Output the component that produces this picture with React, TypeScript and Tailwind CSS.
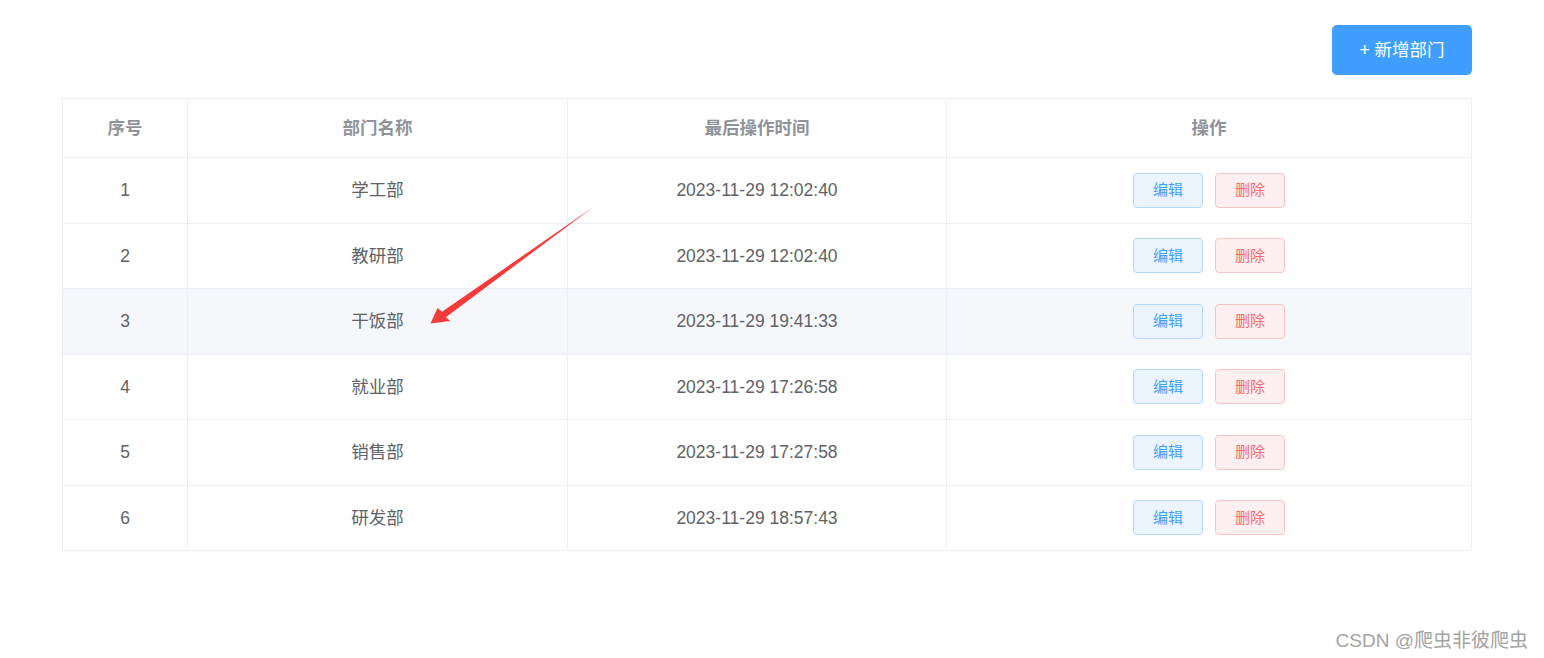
import React from "react";

const rows = [
  { id: 1, name: "学工部", time: "2023-11-29 12:02:40" },
  { id: 2, name: "教研部", time: "2023-11-29 12:02:40" },
  { id: 3, name: "干饭部", time: "2023-11-29 19:41:33", hover: true },
  { id: 4, name: "就业部", time: "2023-11-29 17:26:58" },
  { id: 5, name: "销售部", time: "2023-11-29 17:27:58" },
  { id: 6, name: "研发部", time: "2023-11-29 18:57:43" },
];

const font = { fontFamily: '"Liberation Sans", "Noto Sans CJK SC", sans-serif' };

export default function App() {
  return (
    <div className="relative w-[1544px] h-[658px] bg-white overflow-hidden" style={font}>
      <div className="pl-[62px] pt-[25px] w-[1472px]">
        <div className="flex justify-end">
          <button className="w-[140px] h-[50px] rounded-[5px] bg-[#409eff] text-white text-[17.5px] flex items-center justify-center">
            + 新增部门
          </button>
        </div>
        <div className="mt-[23px] w-[1410px] border-t border-l border-[#ebeef5]">
          <div className="grid grid-cols-[125px_380px_379px_525px] h-[59px] text-[17.5px] font-bold text-[#909399]">
            {["序号", "部门名称", "最后操作时间", "操作"].map((h) => (
              <div key={h} className="border-r border-b border-[#ebeef5] flex items-center justify-center">
                {h}
              </div>
            ))}
          </div>
          {rows.map((r) => (
            <div
              key={r.id}
              className={`grid grid-cols-[125px_380px_379px_525px] h-[65.5px] text-[17.5px] text-[#606266] ${r.hover ? "bg-[#f5f7fa]" : "bg-white"}`}
            >
              <div className="border-r border-b border-[#ebeef5] flex items-center justify-center">{r.id}</div>
              <div className="border-r border-b border-[#ebeef5] flex items-center justify-center">{r.name}</div>
              <div className="border-r border-b border-[#ebeef5] flex items-center justify-center">{r.time}</div>
              <div className="border-r border-b border-[#ebeef5] flex items-center justify-center gap-[12px]">
                <button className="w-[70px] h-[35px] rounded-[4px] border border-[#b3d8ff] bg-[#ecf5ff] text-[#409eff] text-[15px] flex items-center justify-center">
                  编辑
                </button>
                <button className="w-[70px] h-[35px] rounded-[4px] border border-[#fbc4c4] bg-[#fef0f0] text-[#f56c6c] text-[15px] flex items-center justify-center">
                  删除
                </button>
              </div>
            </div>
          ))}
        </div>
      </div>

      <svg className="absolute left-0 top-0 pointer-events-none" width="1544" height="658">
        <polygon
          points="430.5,323.5 437.5,308 442,311.8 594,206.5 445.9,317.2 450.3,321"
          fill="#f53a3a"
        />
      </svg>

      <div className="absolute right-[16px] bottom-[8px] text-[19px] text-[#a3a3a3] leading-none">
        CSDN @爬虫非彼爬虫
      </div>
    </div>
  );
}
